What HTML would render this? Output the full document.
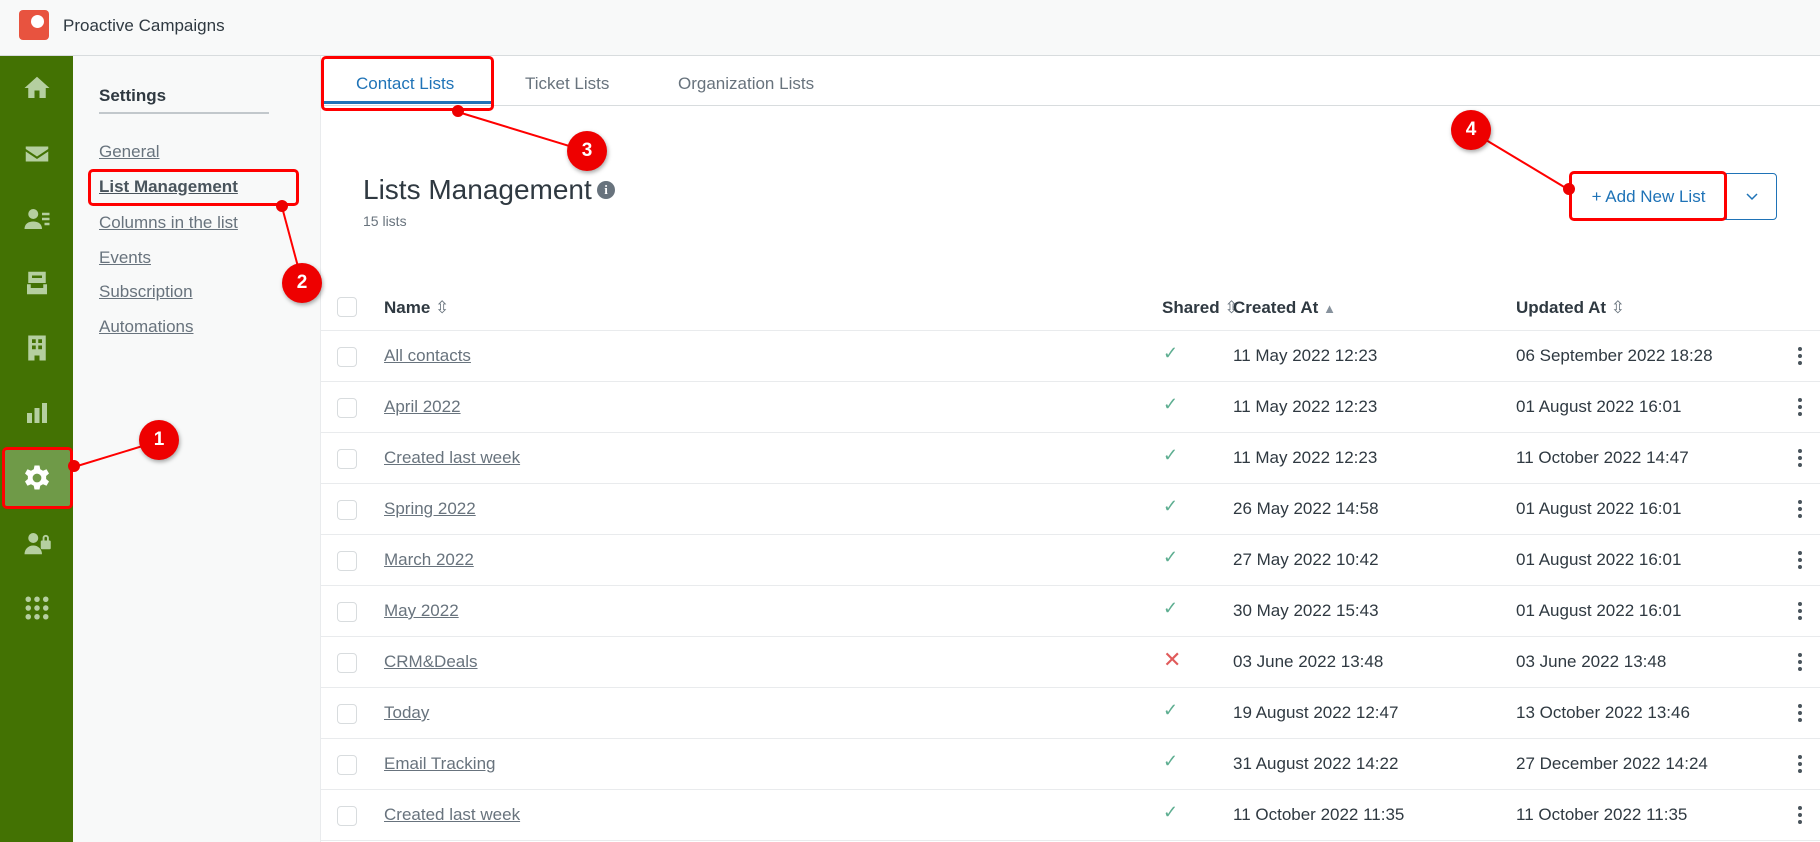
<!DOCTYPE html>
<html><head><meta charset="utf-8"><style>
*{box-sizing:border-box;margin:0;padding:0}
body{width:1820px;height:842px;overflow:hidden;background:#fff;font-family:"Liberation Sans",sans-serif;color:#2f3941;position:relative}
.hdr{position:absolute;left:0;top:0;width:1820px;height:56px;background:#f8f9f9;border-bottom:1px solid #d8dcde}
.logo{position:absolute;left:19px;top:10px;width:30px;height:30px;background:#e8533f;border-radius:4px}
.logo:after{content:"";position:absolute;left:12px;top:5px;width:13px;height:13px;border-radius:50%;background:#fff}
.title{position:absolute;left:63px;top:16px;font-size:17px;color:#2f3941}
.side{position:absolute;left:0;top:56px;width:73px;height:786px;background:#437203}
.ic{position:absolute;left:22px;width:30px;height:30px;fill:#b5cfa0}
.act{position:absolute;left:5px;top:393px;width:66px;height:59px;background:#6f9a48}
.set{position:absolute;left:73px;top:56px;width:248px;height:786px;background:#f8f9f9;border-right:1px solid #e9ebed}
.set h3{position:absolute;left:26px;top:30px;font-size:17px;font-weight:bold;color:#2f3941}
.set .ul{position:absolute;left:26px;top:56px;width:170px;height:2px;background:#c2c8cc}
.set a{position:absolute;left:26px;font-size:17px;color:#68737d;text-decoration:underline}
.tabs{position:absolute;left:321px;top:56px;width:1499px;height:50px;border-bottom:1px solid #d8dcde}
.tab{position:absolute;top:18px;font-size:17px;color:#68737d}
.tabline{position:absolute;left:2px;top:45px;width:170px;height:3px;background:#1f73b7}
h1{position:absolute;left:363px;top:174px;font-size:28px;font-weight:normal;color:#2f3941}
.info{position:absolute;left:597px;top:181px;width:18px;height:18px;border-radius:50%;background:#68737d;color:#fff;font-size:13px;font-weight:bold;text-align:center;line-height:18px;font-family:"Liberation Serif",serif}
.cnt{position:absolute;left:363px;top:213px;font-size:14px;color:#68737d}
.btn{position:absolute;left:1570px;top:173px;width:157px;height:47px;border:1px solid #1f73b7;border-radius:4px 0 0 4px;color:#1f73b7;font-size:17px;text-align:center;line-height:45px}
.dd{position:absolute;left:1726px;top:173px;width:51px;height:47px;border:1px solid #1f73b7;border-radius:0 4px 4px 0}
.th{position:absolute;top:298px;font-size:17px;font-weight:bold;color:#2f3941}
.row{position:absolute;left:321px;width:1499px;height:51px;border-bottom:1px solid #e9ebed}
.cb{position:absolute;left:16px;top:16px;width:20px;height:20px;border:1px solid #d8dcde;border-radius:4px;background:#fff}
.row span{position:absolute;top:15px;font-size:17px;color:#2f3941}
.row .nm{left:63px;color:#68737d;text-decoration:underline}
.row .ok{left:842px;top:12px;color:#5eae91;font-size:18px}
.row .x{left:842px;top:10px;color:#e05b5b;font-size:22px}
.dots{position:absolute;left:1477px;top:16px;width:4px}
.dots i{display:block;width:4px;height:4px;border-radius:50%;background:#49545c;margin-bottom:3px}
.rb{position:absolute;border:3px solid #f00;border-radius:5px}
.ln{position:absolute;height:2px;background:#f00;transform-origin:0 50%}
.dot{position:absolute;width:12px;height:12px;border-radius:50%;background:#e00;margin:-6px 0 0 -6px}
.cir{position:absolute;width:40px;height:40px;margin:-20px 0 0 -20px;border-radius:50%;background:#e00;color:#fff;font-weight:bold;font-size:19px;text-align:center;line-height:40px;box-shadow:1px 2px 4px rgba(0,0,0,.35)}
</style></head><body>
<div class="hdr"><div class="logo"></div><div class="title">Proactive Campaigns</div></div>
<div class="side">
<div class="act"></div>
<svg class="ic" style="top:17px" viewBox="0 0 24 24"><path d="M12 3L2 12h3v8h5v-6h4v6h5v-8h3z"/></svg>
<svg class="ic" style="top:83px" viewBox="0 0 24 24"><path d="M3 6h18v2l-9 6-9-6zM3 10l9 6 9-6v8H3z"/></svg>
<svg class="ic" style="top:148px" viewBox="0 0 24 24"><circle cx="9" cy="8" r="4"/><path d="M2 20c0-4 3-6 7-6s7 2 7 6z"/><rect x="16" y="7" width="6" height="2"/><rect x="16" y="11" width="6" height="2"/><rect x="18" y="15" width="4" height="2"/></svg>
<svg class="ic" style="top:212px" viewBox="0 0 24 24"><path d="M5 3h14v9H5zM8 6v2h8V6zM4 13h3v3h10v-3h3v8H4z"/></svg>
<svg class="ic" style="top:277px" viewBox="0 0 24 24"><path d="M5 2h14v20h-5v-4h-4v4H5zM8 5v3h3V5zm5 0v3h3V5zM8 10v3h3v-3zm5 0v3h3v-3z"/></svg>
<svg class="ic" style="top:342px" viewBox="0 0 24 24"><rect x="4" y="12" width="4" height="8"/><rect x="10" y="8" width="4" height="12"/><rect x="16" y="4" width="4" height="16"/></svg>
<svg class="ic" style="top:407px;fill:#fff" viewBox="0 0 24 24"><path d="M10 2h4l.6 3 2.2 1.2 2.8-1.2 2 3.4-2.3 2v2.4l2.3 2-2 3.4-2.8-1.2-2.2 1.2-.6 3h-4l-.6-3-2.2-1.2-2.8 1.2-2-3.4 2.3-2v-2.4l-2.3-2 2-3.4 2.8 1.2L9.4 5zM12 8.5a3.5 3.5 0 100 7 3.5 3.5 0 000-7z"/></svg>
<svg class="ic" style="top:472px" viewBox="0 0 24 24"><circle cx="9" cy="8" r="4"/><path d="M2 21c0-4 3-7 7-7s7 3 7 7z"/><rect x="15" y="10" width="8" height="7" rx="1"/><path d="M16.5 10V8a2.5 2.5 0 015 0v2h-1.5V8a1 1 0 00-2 0v2z"/></svg>
<svg class="ic" style="top:537px" viewBox="0 0 24 24"><circle cx="5" cy="5" r="2.2"/><circle cx="12" cy="5" r="2.2"/><circle cx="19" cy="5" r="2.2"/><circle cx="5" cy="12" r="2.2"/><circle cx="12" cy="12" r="2.2"/><circle cx="19" cy="12" r="2.2"/><circle cx="5" cy="19" r="2.2"/><circle cx="12" cy="19" r="2.2"/><circle cx="19" cy="19" r="2.2"/></svg>
</div>
<div class="set"><h3>Settings</h3><div class="ul"></div>
<a style="top:86px">General</a>
<a style="top:121px;color:#49545c;font-weight:bold">List Management</a>
<a style="top:157px">Columns in the list</a>
<a style="top:192px">Events</a>
<a style="top:226px">Subscription</a>
<a style="top:261px">Automations</a></div>
<div class="tabs"><div class="tab" style="left:35px;color:#1f73b7">Contact Lists</div><div class="tab" style="left:204px">Ticket Lists</div><div class="tab" style="left:357px">Organization Lists</div><div class="tabline"></div></div>
<h1>Lists Management</h1><div class="info">i</div>
<div class="cnt">15 lists</div>
<div class="btn">+ Add New List</div>
<div class="dd"><svg style="position:absolute;left:18px;top:17px" width="14" height="10" viewBox="0 0 14 10"><path d="M2 3l5 5 5-5" stroke="#1f73b7" stroke-width="1.5" fill="none"/></svg></div>
<div class="row" style="top:280px"><div class="cb" style="top:17px"></div></div>
<div class="th" style="left:384px">Name <span style="font-weight:normal;color:#68737d">&#8691;</span></div>
<div class="th" style="left:1162px">Shared <span style="font-weight:normal;color:#68737d">&#8691;</span></div>
<div class="th" style="left:1233px">Created At <span style="font-weight:normal;color:#87929d;font-size:13px">&#9650;</span></div>
<div class="th" style="left:1516px">Updated At <span style="font-weight:normal;color:#68737d">&#8691;</span></div>

<div class="row" style="top:331px"><div class="cb"></div><span class="nm">All contacts</span><span class="ok">&#10003;</span><span style="left:912px">11 May 2022 12:23</span><span style="left:1195px">06 September 2022 18:28</span><div class="dots"><i></i><i></i><i></i></div></div>
<div class="row" style="top:382px"><div class="cb"></div><span class="nm">April 2022</span><span class="ok">&#10003;</span><span style="left:912px">11 May 2022 12:23</span><span style="left:1195px">01 August 2022 16:01</span><div class="dots"><i></i><i></i><i></i></div></div>
<div class="row" style="top:433px"><div class="cb"></div><span class="nm">Created last week</span><span class="ok">&#10003;</span><span style="left:912px">11 May 2022 12:23</span><span style="left:1195px">11 October 2022 14:47</span><div class="dots"><i></i><i></i><i></i></div></div>
<div class="row" style="top:484px"><div class="cb"></div><span class="nm">Spring 2022</span><span class="ok">&#10003;</span><span style="left:912px">26 May 2022 14:58</span><span style="left:1195px">01 August 2022 16:01</span><div class="dots"><i></i><i></i><i></i></div></div>
<div class="row" style="top:535px"><div class="cb"></div><span class="nm">March 2022</span><span class="ok">&#10003;</span><span style="left:912px">27 May 2022 10:42</span><span style="left:1195px">01 August 2022 16:01</span><div class="dots"><i></i><i></i><i></i></div></div>
<div class="row" style="top:586px"><div class="cb"></div><span class="nm">May 2022</span><span class="ok">&#10003;</span><span style="left:912px">30 May 2022 15:43</span><span style="left:1195px">01 August 2022 16:01</span><div class="dots"><i></i><i></i><i></i></div></div>
<div class="row" style="top:637px"><div class="cb"></div><span class="nm">CRM&amp;Deals</span><span class="x">&#10005;</span><span style="left:912px">03 June 2022 13:48</span><span style="left:1195px">03 June 2022 13:48</span><div class="dots"><i></i><i></i><i></i></div></div>
<div class="row" style="top:688px"><div class="cb"></div><span class="nm">Today</span><span class="ok">&#10003;</span><span style="left:912px">19 August 2022 12:47</span><span style="left:1195px">13 October 2022 13:46</span><div class="dots"><i></i><i></i><i></i></div></div>
<div class="row" style="top:739px"><div class="cb"></div><span class="nm">Email Tracking</span><span class="ok">&#10003;</span><span style="left:912px">31 August 2022 14:22</span><span style="left:1195px">27 December 2022 14:24</span><div class="dots"><i></i><i></i><i></i></div></div>
<div class="row" style="top:790px"><div class="cb"></div><span class="nm">Created last week</span><span class="ok">&#10003;</span><span style="left:912px">11 October 2022 11:35</span><span style="left:1195px">11 October 2022 11:35</span><div class="dots"><i></i><i></i><i></i></div></div>

<div class="rb" style="left:2px;top:447px;width:71px;height:62px"></div>
<div class="rb" style="left:88px;top:169px;width:211px;height:37px"></div>
<div class="rb" style="left:321px;top:56px;width:173px;height:55px"></div>
<div class="rb" style="left:1569px;top:171px;width:158px;height:50px"></div>
<div class="ln" style="left:74px;top:466px;width:89px;transform:rotate(-17deg)"></div>
<div class="ln" style="left:282px;top:206px;width:80px;transform:rotate(75deg)"></div>
<div class="ln" style="left:458px;top:111px;width:135px;transform:rotate(17deg)"></div>
<div class="ln" style="left:1471px;top:130px;width:114px;transform:rotate(31deg)"></div>
<div class="dot" style="left:74px;top:466px"></div>
<div class="dot" style="left:282px;top:206px"></div>
<div class="dot" style="left:458px;top:111px"></div>
<div class="dot" style="left:1569px;top:189px"></div>
<div class="cir" style="left:159px;top:440px">1</div>
<div class="cir" style="left:302px;top:283px">2</div>
<div class="cir" style="left:587px;top:151px">3</div>
<div class="cir" style="left:1471px;top:130px">4</div>
</body></html>
